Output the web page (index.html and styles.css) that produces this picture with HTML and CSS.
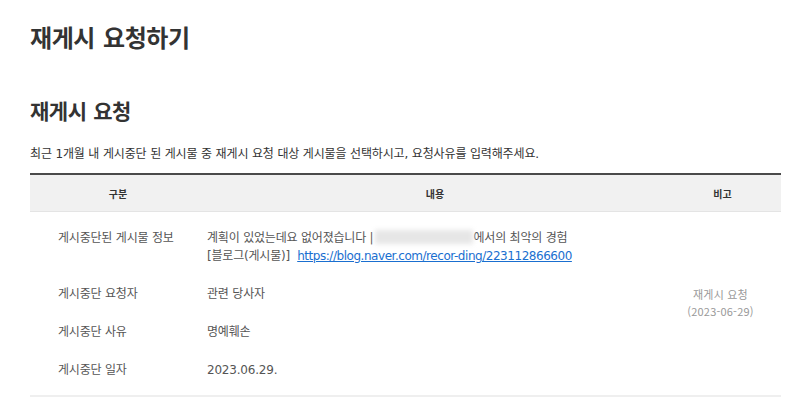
FILE: index.html
```html
<!DOCTYPE html>
<html lang="ko">
<head>
<meta charset="utf-8">
<title>재게시 요청하기</title>
<link rel="stylesheet" href="styles.css">
</head>
<body>
<main class="page">
  <h1 class="page-title">재게시 요청하기</h1>
  <h2 class="section-title">재게시 요청</h2>
  <p class="desc">최근 1개월 내 게시중단 된 게시물 중 재게시 요청 대상 게시물을 선택하시고, 요청사유를 입력해주세요.</p>
  <table class="req-table">
    <colgroup>
      <col class="c1">
      <col class="c2">
      <col class="c3">
    </colgroup>
    <thead>
      <tr>
        <th class="h1">구분</th>
        <th class="h2">내용</th>
        <th class="h3">비고</th>
      </tr>
    </thead>
    <tbody>
      <tr class="first">
        <td class="label">게시중단된 게시물 정보</td>
        <td class="content">계획이 있었는데요 없어졌습니다 |<span class="blur"></span>에서의 최악의 경험<br>[블로그(게시물)]&nbsp; <a class="link" href="#">https://blog.naver.com/recor-ding/223112866600</a></td>
        <td class="empty"></td>
      </tr>
      <tr>
        <td class="label">게시중단 요청자</td>
        <td class="content">관련 당사자</td>
        <td class="remark" rowspan="3">재게시 요청<br>(2023-06-29)</td>
      </tr>
      <tr>
        <td class="label">게시중단 사유</td>
        <td class="content">명예훼손</td>
      </tr>
      <tr class="last">
        <td class="label">게시중단 일자</td>
        <td class="content">2023.06.29.</td>
      </tr>
    </tbody>
  </table>
</main>
</body>
</html>
```

FILE: styles.css
```css
html, body {
  margin: 0;
  padding: 0;
  background: #fff;
}
body {
  font-family: "DejaVu Sans", "Noto Sans CJK KR", sans-serif;
  color: #333;
}
.page {
  padding-left: 30px;
  width: 751px;
}
.page-title {
  margin: 24px 0 0;
  font-size: 24px;
  line-height: 30px;
  font-weight: 700;
  letter-spacing: -0.4px;
  color: #333;
}
.section-title {
  margin: 45px 0 0;
  font-size: 21px;
  line-height: 26px;
  font-weight: 700;
  letter-spacing: -0.5px;
  color: #333;
}
.desc {
  margin: 20px 0 0;
  font-size: 12px;
  line-height: 18px;
  letter-spacing: -0.15px;
  color: #333;
}
.req-table {
  margin-top: 10px;
  width: 751px;
  border-collapse: collapse;
  table-layout: fixed;
  border-top: 2px solid #4a4a4a;
  border-bottom: 2px solid #efefef;
}
.c1, .h1 { width: 176px; }
.c2, .h2 { width: 458px; }
.c3, .h3 { width: 117px; }
.req-table th {
  background: #f1f1f1;
  height: 36px;
  padding: 0;
  font-size: 10px;
  font-weight: 700;
  color: #333;
  text-align: center;
  border-bottom: 1px solid #e4e4e4;
}
.req-table td {
  padding: 10px 0;
  line-height: 18px;
  vertical-align: top;
  font-size: 12px;
  letter-spacing: -0.2px;
  color: #555;
}
.req-table tr.first td { padding-top: 17px; }
.req-table tr.last td { padding-bottom: 16px; }
.req-table td.label { padding-left: 28px; }
.req-table td.content { padding-left: 1px; }
.req-table td.remark {
  padding-top: 11px;
  padding-right: 4px;
  text-align: center;
  font-family: "Noto Sans CJK KR", sans-serif;
  font-size: 11px;
  line-height: 17px;
  letter-spacing: 0.2px;
  color: #999;
}
.blur {
  display: inline-block;
  width: 98px;
  height: 14px;
  margin-left: 2px;
  vertical-align: -2px;
  background: #e6e6e6;
  filter: blur(2.5px);
}
.link {
  color: #1a6fd0;
  letter-spacing: -0.46px;
  text-decoration: underline;
}
```
